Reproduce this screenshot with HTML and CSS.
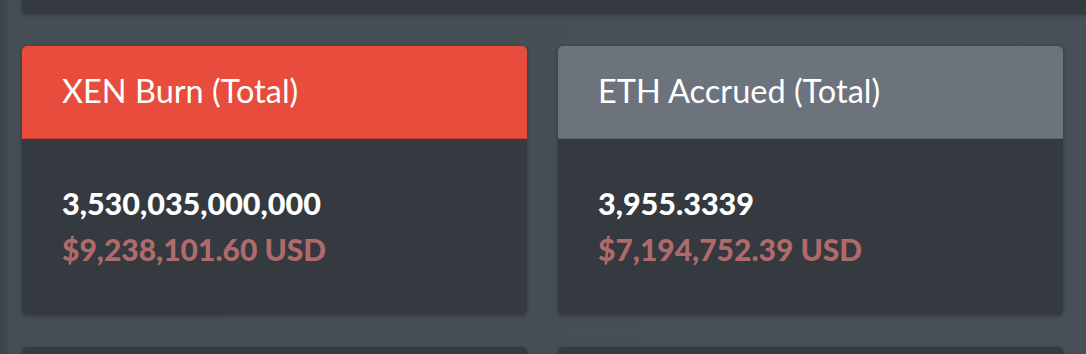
FILE: index.html
```html
<!DOCTYPE html>
<html lang="en">
<head>
    <meta charset="UTF-8">
    <title>XEN Burn Stats</title>
    <link rel="stylesheet" href="styles.css">
</head>
<body>
    <div class="page">
        <div class="panel panel_top"></div>

        <div class="stats">
            <div class="stat">
                <div class="stat_head stat_head_red">XEN Burn (Total)</div>
                <div class="stat_body">
                    <div class="stat_value">3,530,035,000,000</div>
                    <div class="stat_usd">$9,238,101.60 USD</div>
                </div>
            </div>
            <div class="stat">
                <div class="stat_head stat_head_gray">ETH Accrued (Total)</div>
                <div class="stat_body">
                    <div class="stat_value">3,955.3339</div>
                    <div class="stat_usd">$7,194,752.39 USD</div>
                </div>
            </div>
        </div>

        <div class="stats">
            <div class="panel panel_next"></div>
            <div class="panel panel_next"></div>
        </div>
    </div>
</body>
</html>
```

FILE: styles.css
```css
*{
    margin: 0;
    padding: 0;
    box-sizing: border-box;
}
html,
body{
    height: 100%;
    overflow: hidden;
}
body{
    background: linear-gradient(90deg, #3b4249 0px, #454d55 10px, #474f57 100%);
    font-family: "Lato", "Liberation Sans", sans-serif;
    color: #fff;
}
.page{
    padding: 0 23px 0 22px;
    margin-top: -40px;
}
.panel{
    background: #343a40;
    border-radius: 5px;
    box-shadow: 0 1px 4px rgba(0,0,0,0.25);
}
.panel_top{
    height: 54px;
    margin-right: -40px;
}
.stats{
    display: grid;
    grid-template-columns: 1fr 1fr;
    gap: 31px;
    margin-top: 32px;
}
.stat{
    border-radius: 5px;
    overflow: hidden;
    background: #343a40;
    box-shadow: 0 1px 4px rgba(0,0,0,0.25);
}
.stat_head{
    height: 93px;
    padding: 0 0 4px 40px;
    display: flex;
    align-items: center;
    font-size: 32.5px;
    border-bottom: 1px solid rgba(0,0,0,0.15);
}
.stat_head_red{
    background: #e74c3c;
}
.stat_head_gray{
    background: #6c737c;
}
.stat_body{
    height: 176px;
    padding: 41px 40px 0;
}
.stat_value,
.stat_usd{
    font-size: 30.5px;
    font-weight: 900;
    line-height: 46px;
}
.stat_usd{
    font-size: 30px;
    color: #b06a6a;
}
.panel_next{
    height: 40px;
}
```
